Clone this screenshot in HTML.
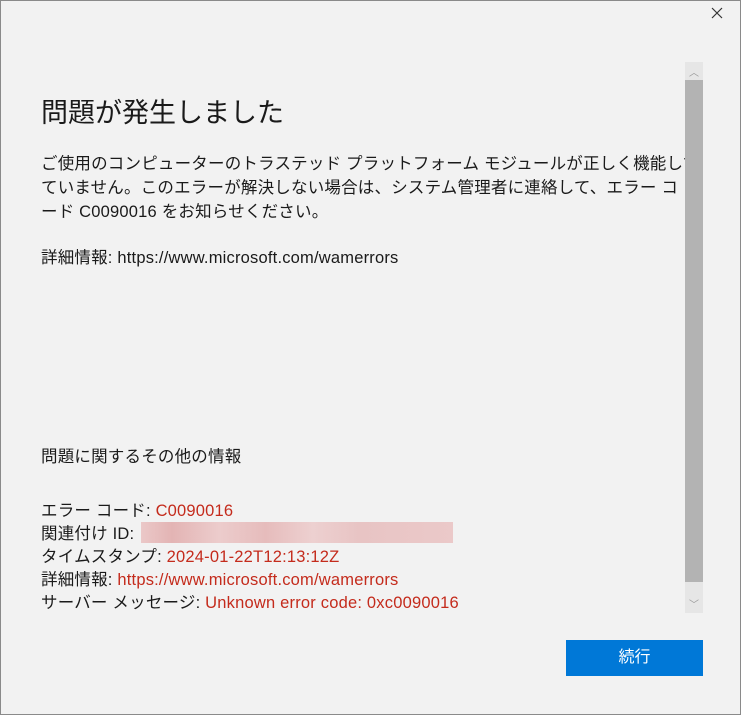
<!DOCTYPE html>
<html><head><meta charset="utf-8"><style>
body{margin:0;width:741px;height:715px;background:#f2f2f2;overflow:hidden;position:relative;font-family:"Liberation Sans","Noto Sans CJK JP",sans-serif;color:#1a1a1a}
.frame{position:absolute;left:0;top:0;width:739px;height:713px;border:1px solid #8a8a8a}
.x{position:absolute;left:711px;top:7px}
.clip{position:absolute;left:41px;top:0;width:644px;height:715px;overflow:hidden}
.t{position:absolute;left:0;white-space:nowrap}
h1{position:absolute;left:0;top:91px;margin:0;font-weight:normal;font-size:27px;white-space:nowrap}
.b{font-size:16.5px;letter-spacing:0.2px;line-height:22px}
.r{color:#c42b1c}
.sb{position:absolute;left:685px;top:62px;width:18px;height:551px;background:#e6e6e6}
.th{position:absolute;left:685px;top:80px;width:18px;height:502px;background:#b3b3b3}
.ar{position:absolute;left:685px;width:18px;text-align:center;font-size:10px;color:#999}
.btn{position:absolute;left:566px;top:640px;width:137px;height:36px;background:#0078d7;color:#fff;font-size:16px;text-align:center;line-height:36px}
.blur{position:absolute;left:141px;top:522px;width:312px;height:21px;background:linear-gradient(90deg,#ebc8c8,#e3b4b4 10%,#eccccc 25%,#e6bcbc 40%,#edd0d0 55%,#e8c4c4 70%,#ebc9c9 100%)}
</style></head><body>
<div class="frame"></div>
<svg class="x" width="12" height="12" viewBox="0 0 12 12"><path d="M1 1L11 11M11 1L1 11" stroke="#333" stroke-width="1.2"/></svg>
<div class="clip">
<h1>問題が発生しました</h1>
<div class="t b" style="top:153px">ご使用のコンピューターのトラステッド プラットフォーム モジュールが正しく機能していません</div>
<div class="t b" style="top:177px">ていません。このエラーが解決しない場合は、システム管理者に連絡して、エラー コ</div>
<div class="t b" style="top:201px">ード C0090016 をお知らせください。</div>
<div class="t b" style="top:247px">詳細情報: https://www.microsoft.com/wamerrors</div>
<div class="t b" style="top:446px">問題に関するその他の情報</div>
<div class="t b" style="top:500px">エラー コード: <span class="r">C0090016</span></div>
<div class="t b" style="top:523px">関連付け ID:</div>
<div class="t b" style="top:546px">タイムスタンプ: <span class="r">2024-01-22T12:13:12Z</span></div>
<div class="t b" style="top:569px">詳細情報: <span class="r">https://www.microsoft.com/wamerrors</span></div>
<div class="t b" style="top:592px">サーバー メッセージ: <span class="r">Unknown error code: 0xc0090016</span></div>
</div>
<div class="blur"></div>
<div class="sb"></div><div class="th"></div>
<div class="ar" style="top:64px">︿</div>
<div class="ar" style="top:596px">﹀</div>
<div class="btn">続行</div>
</body></html>
